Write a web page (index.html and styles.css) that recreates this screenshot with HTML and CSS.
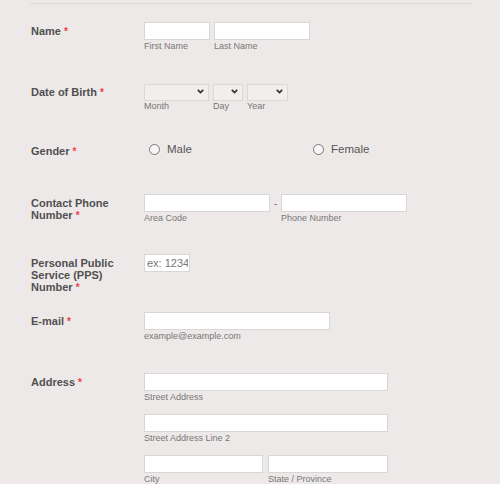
FILE: index.html
```html
<!DOCTYPE html>
<html lang="en">
<head>
<meta charset="utf-8">
<title>Form</title>
<link rel="stylesheet" href="styles.css">
</head>
<body>
<div class="form">
  <div class="topline"></div>

  <div class="row row-name">
    <label class="label">Name <span class="req">*</span></label>
    <div class="fields">
      <div class="sub-field">
        <input class="input w-first" type="text">
        <span class="sublabel">First Name</span>
      </div>
      <div class="sub-field">
        <input class="input w-last" type="text">
        <span class="sublabel">Last Name</span>
      </div>
    </div>
  </div>

  <div class="row row-dob">
    <label class="label">Date of Birth <span class="req">*</span></label>
    <div class="fields">
      <div class="sub-field">
        <div class="select-wrap w-month">
          <select class="select"><option></option></select>
          <svg class="chev" width="7" height="5" viewBox="0 0 7 5"><path d="M0.8 0.8 L3.5 3.6 L6.2 0.8" fill="none" stroke="#333" stroke-width="1.7"/></svg>
        </div>
        <span class="sublabel">Month</span>
      </div>
      <div class="sub-field">
        <div class="select-wrap w-day">
          <select class="select"><option></option></select>
          <svg class="chev" width="7" height="5" viewBox="0 0 7 5"><path d="M0.8 0.8 L3.5 3.6 L6.2 0.8" fill="none" stroke="#333" stroke-width="1.7"/></svg>
        </div>
        <span class="sublabel">Day</span>
      </div>
      <div class="sub-field">
        <div class="select-wrap w-year">
          <select class="select"><option></option></select>
          <svg class="chev" width="7" height="5" viewBox="0 0 7 5"><path d="M0.8 0.8 L3.5 3.6 L6.2 0.8" fill="none" stroke="#333" stroke-width="1.7"/></svg>
        </div>
        <span class="sublabel">Year</span>
      </div>
    </div>
  </div>

  <div class="row row-gender">
    <label class="label label-gender">Gender <span class="req">*</span></label>
    <div class="radios">
      <label class="radio-opt"><input class="radio" type="radio" name="g"> <span>Male</span></label>
      <label class="radio-opt"><input class="radio" type="radio" name="g"> <span>Female</span></label>
    </div>
  </div>

  <div class="row row-phone">
    <label class="label">Contact Phone Number <span class="req">*</span></label>
    <div class="fields fields-phone">
      <div class="sub-field">
        <input class="input w-area" type="text">
        <span class="sublabel">Area Code</span>
      </div>
      <span class="dash">-</span>
      <div class="sub-field">
        <input class="input w-phone" type="text">
        <span class="sublabel">Phone Number</span>
      </div>
    </div>
  </div>

  <div class="row row-pps">
    <label class="label">Personal Public Service (PPS) Number <span class="req">*</span></label>
    <div class="fields">
      <input class="input input-pps" type="text" placeholder="ex: 1234">
    </div>
  </div>

  <div class="row row-email">
    <label class="label">E-mail <span class="req">*</span></label>
    <div class="fields">
      <div class="sub-field">
        <input class="input w-email" type="email">
        <span class="sublabel">example@example.com</span>
      </div>
    </div>
  </div>

  <div class="row row-address">
    <label class="label">Address <span class="req">*</span></label>
    <div class="address">
      <div class="sub-field">
        <input class="input w-street" type="text">
        <span class="sublabel">Street Address</span>
      </div>
      <div class="sub-field">
        <input class="input w-street" type="text">
        <span class="sublabel">Street Address Line 2</span>
      </div>
      <div class="addr-pair">
        <div class="sub-field">
          <input class="input w-city" type="text">
          <span class="sublabel">City</span>
        </div>
        <div class="sub-field">
          <input class="input w-state" type="text">
          <span class="sublabel">State / Province</span>
        </div>
      </div>
    </div>
  </div>
</div>
</body>
</html>
```

FILE: styles.css
```css
html, body {
  margin: 0;
  padding: 0;
}
body {
  background: #eee9e9;
  font-family: "Liberation Sans", Arial, Helvetica, sans-serif;
  color: #555;
  width: 500px;
  height: 484px;
  overflow: hidden;
}
.form {
  padding-left: 31px;
  padding-top: 3px;
}
.topline {
  width: 442px;
  margin-left: -1px;
  height: 1px;
  background: #dfdbdb;
}
.row {
  display: flex;
  align-items: flex-start;
}
.label {
  width: 113px;
  flex: none;
  font-size: 11px;
  font-weight: bold;
  line-height: 12px;
  color: #505050;
  padding-top: 3px;
  box-sizing: border-box;
  padding-right: 10px;
}
.req {
  color: #f23a3a;
  font-size: 10px;
}
.fields {
  display: flex;
  gap: 4px;
}
.sub-field {
  display: flex;
  flex-direction: column;
}
.input {
  box-sizing: border-box;
  height: 18px;
  margin: 0;
  border: 1px solid #d9d6d6;
  background: #fff;
  padding: 0 2px;
  font-family: "Liberation Sans", Arial, sans-serif;
  font-size: 12px;
  color: #555;
  outline: none;
  border-radius: 0;
}
.sublabel {
  font-size: 9px;
  line-height: 11px;
  color: #777;
  margin-top: 1px;
}
.w-first { width: 66px; }
.w-last { width: 96px; }
.w-area { width: 126px; }
.w-phone { width: 126px; }
.w-email { width: 186px; }
.w-street { width: 244px; }
.w-city { width: 119px; }
.w-state { width: 120px; }
.input-pps {
  width: 46px;
  padding: 0 1px 0 2px;
  font-size: 11px;
}
.input-pps::placeholder {
  color: #777;
  opacity: 1;
}

.row-name { margin-top: 18px; }
.row-dob { margin-top: 31px; }
.row-gender { margin-top: 30px; }
.row-phone { margin-top: 36px; }
.row-pps { margin-top: 30px; }
.row-email { margin-top: 18px; }
.row-address { margin-top: 31px; }

.select-wrap {
  position: relative;
  height: 17px;
}
.select {
  appearance: none;
  -webkit-appearance: none;
  box-sizing: border-box;
  width: 100%;
  height: 17px;
  margin: 0;
  border: 1px solid #dcd8d8;
  background: #f1eeee;
  border-radius: 0;
  outline: none;
}
.chev {
  position: absolute;
  right: 5px;
  top: 6px;
  pointer-events: none;
}
.w-month { width: 65px; }
.w-day { width: 30px; }
.w-year { width: 41px; }

.label-gender { padding-top: 3px; }
.radios {
  display: flex;
  padding-left: 5px;
}
.radio-opt {
  width: 164px;
  display: flex;
  align-items: center;
  font-size: 11.5px;
  color: #555;
  line-height: 14px;
}
.radio {
  appearance: none;
  -webkit-appearance: none;
  width: 11px;
  height: 11px;
  margin: 0 7px 0 0;
  border: 1px solid #777;
  border-radius: 50%;
  background: #f7f5f5;
  box-sizing: border-box;
}

.fields-phone { gap: 0; }
.dash {
  width: 11px;
  text-align: center;
  font-size: 11px;
  line-height: 18px;
  color: #777;
}

.address {
  display: flex;
  flex-direction: column;
  gap: 11px;
}
.addr-pair {
  display: flex;
  gap: 5px;
}
```
